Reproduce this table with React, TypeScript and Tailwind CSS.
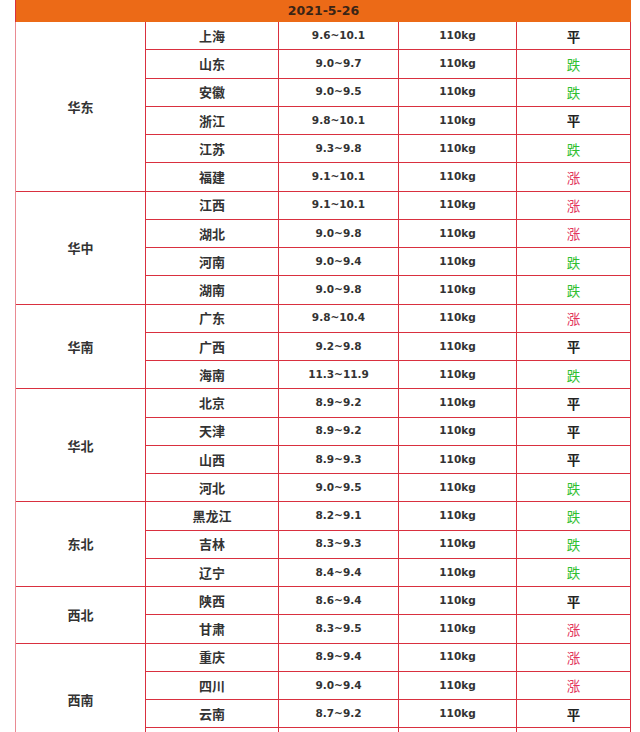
import React from "react";

type Row = { p: string; price: string; t: "平" | "跌" | "涨" | "" };
type Group = { region: string; span: string; rows: Row[] };

const groups: Group[] = [
  {
    region: "华东",
    span: "row-span-6",
    rows: [
      { p: "上海", price: "9.6~10.1", t: "平" },
      { p: "山东", price: "9.0~9.7", t: "跌" },
      { p: "安徽", price: "9.0~9.5", t: "跌" },
      { p: "浙江", price: "9.8~10.1", t: "平" },
      { p: "江苏", price: "9.3~9.8", t: "跌" },
      { p: "福建", price: "9.1~10.1", t: "涨" },
    ],
  },
  {
    region: "华中",
    span: "row-span-4",
    rows: [
      { p: "江西", price: "9.1~10.1", t: "涨" },
      { p: "湖北", price: "9.0~9.8", t: "涨" },
      { p: "河南", price: "9.0~9.4", t: "跌" },
      { p: "湖南", price: "9.0~9.8", t: "跌" },
    ],
  },
  {
    region: "华南",
    span: "row-span-3",
    rows: [
      { p: "广东", price: "9.8~10.4", t: "涨" },
      { p: "广西", price: "9.2~9.8", t: "平" },
      { p: "海南", price: "11.3~11.9", t: "跌" },
    ],
  },
  {
    region: "华北",
    span: "row-span-4",
    rows: [
      { p: "北京", price: "8.9~9.2", t: "平" },
      { p: "天津", price: "8.9~9.2", t: "平" },
      { p: "山西", price: "8.9~9.3", t: "平" },
      { p: "河北", price: "9.0~9.5", t: "跌" },
    ],
  },
  {
    region: "东北",
    span: "row-span-3",
    rows: [
      { p: "黑龙江", price: "8.2~9.1", t: "跌" },
      { p: "吉林", price: "8.3~9.3", t: "跌" },
      { p: "辽宁", price: "8.4~9.4", t: "跌" },
    ],
  },
  {
    region: "西北",
    span: "row-span-2",
    rows: [
      { p: "陕西", price: "8.6~9.4", t: "平" },
      { p: "甘肃", price: "8.3~9.5", t: "涨" },
    ],
  },
  {
    region: "西南",
    span: "row-span-4",
    rows: [
      { p: "重庆", price: "8.9~9.4", t: "涨" },
      { p: "四川", price: "9.0~9.4", t: "涨" },
      { p: "云南", price: "8.7~9.2", t: "平" },
      // row below the fold, only its top line shows
      { p: "", price: "", t: "" },
    ],
  },
];

const cjk = "font-['Noto_Sans_CJK_SC','Noto_Sans',sans-serif]";
const num = "font-['DejaVu_Sans',sans-serif]";

const trendCls = (t: Row["t"]) => {
  if (t === "跌") return "text-[#2fc02f] font-normal";
  if (t === "涨") return "text-[#e2355c] font-normal";
  return "text-[#222] font-bold";
};

export default function App() {
  return (
    <div className="w-[640px] min-h-[732px] bg-white overflow-hidden">
      <div className="ml-[15px] w-[616px]">
        {/* date header */}
        <div
          className={`h-[22px] bg-[#ec6a17] border-l border-[#d9303f] flex items-center justify-center text-[12.5px] font-bold text-[#3a2416] ${num}`}
        >
          2021-5-26
        </div>

        <div className="grid grid-cols-[129px_132px_119px_117px_113px] auto-rows-[27.25px] gap-px bg-[#d9303f] border-l border-l-[#e98a92] border-r border-r-[#d9303f]">
          {groups.map((g) => (
            <React.Fragment key={g.region}>
              <div
                className={`${g.span} bg-white flex items-center justify-center text-[13px] font-bold text-[#333] ${cjk}`}
              >
                {g.region}
              </div>
              {g.rows.map((r, i) => (
                <React.Fragment key={g.region + i}>
                  <div
                    className={`col-start-2 bg-white flex items-center justify-center text-[13px] font-bold text-[#333] ${cjk}`}
                  >
                    {r.p}
                  </div>
                  <div
                    className={`bg-white flex items-center justify-center text-[10.5px] font-bold text-[#333] ${num}`}
                  >
                    {r.price}
                  </div>
                  <div
                    className={`bg-white flex items-center justify-center text-[10.5px] font-bold text-[#333] ${num}`}
                  >
                    {r.p ? "110kg" : ""}
                  </div>
                  <div
                    className={`bg-white flex items-center justify-center text-[13.5px] ${cjk} ${trendCls(r.t)}`}
                  >
                    {r.t}
                  </div>
                </React.Fragment>
              ))}
            </React.Fragment>
          ))}
        </div>
      </div>
    </div>
  );
}
